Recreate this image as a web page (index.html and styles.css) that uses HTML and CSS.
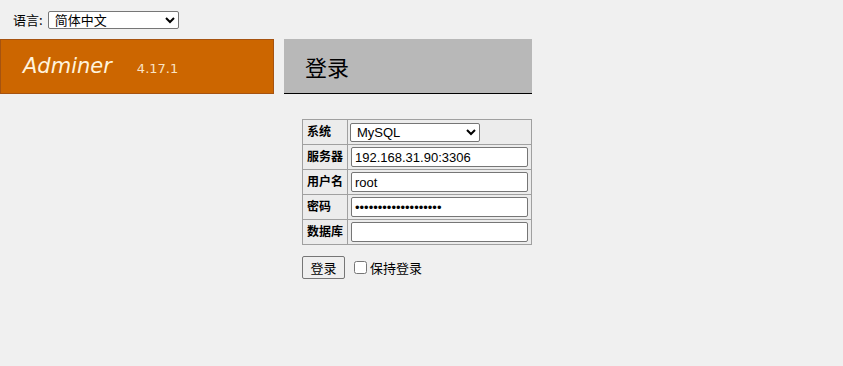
FILE: index.html
```html
<!DOCTYPE html>
<html lang="zh">
<head>
<meta charset="utf-8">
<title>登录 - Adminer</title>
<link rel="stylesheet" href="styles.css">
</head>
<body>
<form class="lang">语言: <select class="lang-select"><option>简体中文</option></select></form>
<div class="main">
  <div class="menu">
    <h1 class="logo"><span class="logo-name">Adminer</span> <span class="version">4.17.1</span></h1>
  </div>
  <div class="content">
    <h2 class="title">登录</h2>
    <form class="login">
      <table class="layout">
        <tr><th>系统</th><td><select class="driver"><option>MySQL</option></select></td></tr>
        <tr><th>服务器</th><td><input class="field" type="text" value="192.168.31.90:3306"></td></tr>
        <tr><th>用户名</th><td><input class="field" type="text" value="root"></td></tr>
        <tr><th>密码</th><td><input class="field" type="password" value="1234567890123456789"></td></tr>
        <tr><th>数据库</th><td><input class="field" type="text" value=""></td></tr>
      </table>
      <div class="actions">
        <button class="submit" type="button">登录</button>
        <label class="permanent"><input class="check" type="checkbox">保持登录</label>
      </div>
    </form>
  </div>
</div>
</body>
</html>
```

FILE: styles.css
```css
html, body {
  margin: 0;
  padding: 0;
  background: #f0f0f0;
  color: #000;
  font-family: Verdana, "DejaVu Sans", "Noto Sans CJK SC", sans-serif;
  font-size: 12px;
}
.lang {
  margin: 0;
  padding: 10px 13px 0;
  height: 29px;
  box-sizing: border-box;
  display: flex;
  align-items: center;
  gap: 5px;
  font-family: "Noto Sans CJK SC", sans-serif;
  font-size: 13px;
}
.lang-select {
  width: 131px;
  height: 18px;
  font-family: "Liberation Sans", "Noto Sans CJK SC", sans-serif;
  font-size: 13px;
  padding: 0 0 0 2px;
  border: 1px solid #767676;
  border-radius: 2px;
  background: #fff;
}
.main {
  display: flex;
  gap: 10px;
  margin-top: 10px;
}
.menu {
  width: 274px;
}
.logo {
  margin: 0;
  height: 55px;
  box-sizing: border-box;
  background: #cc6600;
  border: 1px solid #a65310;
  display: flex;
  align-items: center;
  padding: 0 0 2px 22px;
  font-weight: normal;
}
.logo-name {
  font-family: Verdana, "DejaVu Sans", sans-serif;
  font-style: italic;
  font-size: 21px;
  color: #fff3dc;
}
.version {
  margin-left: 25px;
  margin-top: 5px;
  font-family: Verdana, "DejaVu Sans", sans-serif;
  font-size: 13px;
  color: #f9e3c4;
}
.content {
  width: 248px;
}
.title {
  margin: 0;
  height: 55px;
  box-sizing: border-box;
  background: #b8b8b8;
  border-bottom: 1px solid #000;
  display: flex;
  align-items: center;
  padding: 0 0 0 21px;
  font-weight: normal;
  font-size: 22px;
  font-family: "Noto Sans CJK SC", sans-serif;
}
.login {
  margin: 25px 0 0 18px;
}
.layout {
  border-collapse: collapse;
  border: 1px solid #a0a0a0;
  width: 230px;
}
.layout th, .layout td {
  border: 1px solid #a0a0a0;
  height: 25px;
  box-sizing: border-box;
  padding: 0 3px;
  background: #ececec;
}
.layout th {
  text-align: left;
  font-family: "Noto Sans CJK SC", sans-serif;
  font-weight: bold;
  font-size: 12px;
  width: 45px;
  padding: 0 4px 3px;
}
.layout td {
  padding: 0 2px;
}
.driver {
  width: 130px;
  height: 19px;
  font-family: "Liberation Sans", sans-serif;
  font-size: 13px;
  padding: 0 0 0 2px;
  border: 1px solid #767676;
  border-radius: 2px;
  background: #fff;
  display: block;
}
.field {
  display: block;
  width: 177px;
  height: 20px;
  box-sizing: border-box;
  border: 1px solid #767676;
  border-radius: 2px;
  padding: 0 3px;
  font-family: "Liberation Sans", sans-serif;
  font-size: 13px;
  background: #fff;
  margin-left: 1px;
}
.actions {
  display: flex;
  align-items: center;
  margin-top: 11px;
  gap: 5px;
}
.submit {
  height: 23px;
  width: 43px;
  padding: 0;
  font-family: "Noto Sans CJK SC", sans-serif;
  font-size: 13px;
  border: 1px solid #767676;
  border-radius: 2px;
  background: #efefef;
}
.permanent {
  display: flex;
  align-items: center;
  font-family: "Noto Sans CJK SC", sans-serif;
  font-size: 13px;
}
.check {
  margin: 0 3px 0 4px;
  width: 13px;
  height: 13px;
}
```
